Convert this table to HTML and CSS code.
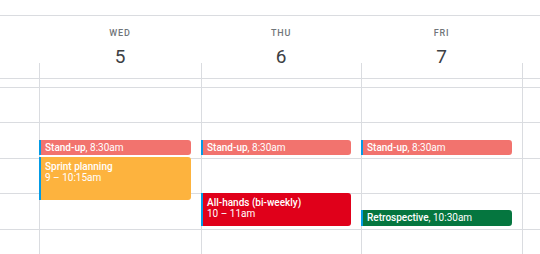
FILE: index.html
```html
<!DOCTYPE html>
<html>
<head>
<meta charset="utf-8">
<link rel="stylesheet" href="styles.css">
</head>
<body>
<div class="cal">
  <div class="topbar"></div>
  <div class="head">
    <div class="gutter"></div>
    <div class="day"><div class="dname">WED</div><div class="dnum">5</div></div>
    <div class="day"><div class="dname">THU</div><div class="dnum">6</div></div>
    <div class="day"><div class="dname">FRI</div><div class="dnum">7</div></div>
    <div class="day"></div>
  </div>
  <div class="strip">
    <div class="gutter"></div>
    <div class="col"></div><div class="col"></div><div class="col"></div><div class="col"></div>
  </div>
  <div class="allday">
    <div class="gutter"></div>
    <div class="col"></div><div class="col"></div><div class="col"></div><div class="col"></div>
  </div>
  <div class="body">
    <div class="hours">
      <div class="hour first"></div>
      <div class="hour"></div>
      <div class="hour"></div>
      <div class="hour"></div>
      <div class="hour"></div>
    </div>
    <div class="cols">
      <div class="gutter"></div>
      <div class="col">
        <div class="event salmon" style="top:53px;height:15px"><span class="t">Stand-up</span>, 8:30am</div>
        <div class="event banana multi" style="top:70px;height:43px"><div class="t">Sprint planning</div><div>9 – 10:15am</div></div>
      </div>
      <div class="col">
        <div class="event salmon" style="top:53px;height:15px"><span class="t">Stand-up</span>, 8:30am</div>
        <div class="event tomato multi" style="top:106px;height:33px"><div class="t">All-hands (bi-weekly)</div><div>10 – 11am</div></div>
      </div>
      <div class="col">
        <div class="event salmon" style="top:53px;height:15px"><span class="t">Stand-up</span>, 8:30am</div>
        <div class="event basil" style="top:123px;height:16px"><span class="t">Retrospective</span>, 10:30am</div>
      </div>
      <div class="col"></div>
    </div>
  </div>
</div>
</body>
</html>
```
FILE: styles.css
```css
* { box-sizing: border-box; }
html, body { margin: 0; padding: 0; background: #fff; }
body { font-family: Roboto, "Noto Sans", Arial, sans-serif; width: 540px; height: 254px; overflow: hidden; }
.cal { width: 540px; }
.topbar { height: 16px; border-bottom: 1px solid #dadce0; }
.head, .strip, .allday, .cols {
  display: grid;
  grid-template-columns: 39px 162px 160px 161px 1fr;
}
.head { height: 47px; }
.day { display: flex; flex-direction: column; align-items: center; padding-top: 12px; }
.dname { font-size: 9px; font-weight: 500; letter-spacing: 0.8px; color: #70757a; line-height: 11px; }
.dnum { font-size: 19px; color: #3c4043; line-height: 22px; margin-top: 7px; }
.strip { height: 16px; border-bottom: 1px solid #dadce0; }
.allday { height: 8px; }
.col { border-left: 1px solid #dadce0; position: relative; }
.body { position: relative; height: 167px; }
.hours { display: flex; flex-direction: column; }
.hour { height: 35.5px; border-top: 1px solid #dadce0; flex: none; }
.hour.first { height: 35px; }
.cols { position: absolute; inset: 0; }
.event {
  position: absolute; left: -1px; right: 10px;
  border-left: 2px solid #039be5;
  border-radius: 0 3px 3px 0;
  color: #fff; font-size: 10px; line-height: 11px;
  padding: 2px 0 0 4px;
  white-space: nowrap; overflow: hidden;
}
.event.multi { padding-top: 4px; }
.t { font-weight: 500; }
.salmon { background: #f2736e; }
.banana { background: #fdb33e; }
.tomato { background: #e0001a; }
.basil { background: #05763f; }
```
